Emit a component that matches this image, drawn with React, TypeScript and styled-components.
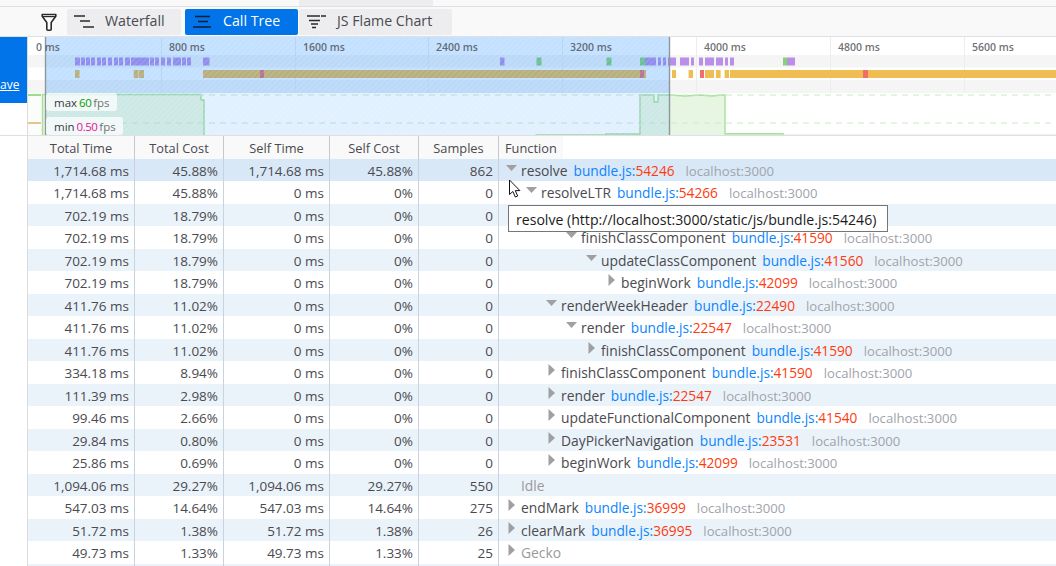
import { createGlobalStyle, styled } from "styled-components";

// == DATA ==
type Row = {
  total: string;
  cost: string;
  self: string;
  selfCost: string;
  samples: string;
  depth: number;
  toggle: "open" | "closed" | "none";
  name?: string;
  line?: string;
  dim?: boolean;
};

const rows: Row[] = [
  { total: "1,714.68 ms", cost: "45.88%", self: "1,714.68 ms", selfCost: "45.88%", samples: "862", depth: 0, toggle: "open", name: "resolve", line: "54246" },
  { total: "1,714.68 ms", cost: "45.88%", self: "0 ms", selfCost: "0%", samples: "0", depth: 1, toggle: "open", name: "resolveLTR", line: "54266" },
  // this row's function sits under the tooltip
  { total: "702.19 ms", cost: "18.79%", self: "0 ms", selfCost: "0%", samples: "0", depth: 2, toggle: "none" },
  { total: "702.19 ms", cost: "18.79%", self: "0 ms", selfCost: "0%", samples: "0", depth: 3, toggle: "open", name: "finishClassComponent", line: "41590" },
  { total: "702.19 ms", cost: "18.79%", self: "0 ms", selfCost: "0%", samples: "0", depth: 4, toggle: "open", name: "updateClassComponent", line: "41560" },
  { total: "702.19 ms", cost: "18.79%", self: "0 ms", selfCost: "0%", samples: "0", depth: 5, toggle: "closed", name: "beginWork", line: "42099" },
  { total: "411.76 ms", cost: "11.02%", self: "0 ms", selfCost: "0%", samples: "0", depth: 2, toggle: "open", name: "renderWeekHeader", line: "22490" },
  { total: "411.76 ms", cost: "11.02%", self: "0 ms", selfCost: "0%", samples: "0", depth: 3, toggle: "open", name: "render", line: "22547" },
  { total: "411.76 ms", cost: "11.02%", self: "0 ms", selfCost: "0%", samples: "0", depth: 4, toggle: "closed", name: "finishClassComponent", line: "41590" },
  { total: "334.18 ms", cost: "8.94%", self: "0 ms", selfCost: "0%", samples: "0", depth: 2, toggle: "closed", name: "finishClassComponent", line: "41590" },
  { total: "111.39 ms", cost: "2.98%", self: "0 ms", selfCost: "0%", samples: "0", depth: 2, toggle: "closed", name: "render", line: "22547" },
  { total: "99.46 ms", cost: "2.66%", self: "0 ms", selfCost: "0%", samples: "0", depth: 2, toggle: "closed", name: "updateFunctionalComponent", line: "41540" },
  { total: "29.84 ms", cost: "0.80%", self: "0 ms", selfCost: "0%", samples: "0", depth: 2, toggle: "closed", name: "DayPickerNavigation", line: "23531" },
  { total: "25.86 ms", cost: "0.69%", self: "0 ms", selfCost: "0%", samples: "0", depth: 2, toggle: "closed", name: "beginWork", line: "42099" },
  { total: "1,094.06 ms", cost: "29.27%", self: "1,094.06 ms", selfCost: "29.27%", samples: "550", depth: 0, toggle: "none", name: "Idle", dim: true },
  { total: "547.03 ms", cost: "14.64%", self: "547.03 ms", selfCost: "14.64%", samples: "275", depth: 0, toggle: "closed", name: "endMark", line: "36999" },
  { total: "51.72 ms", cost: "1.38%", self: "51.72 ms", selfCost: "1.38%", samples: "26", depth: 0, toggle: "closed", name: "clearMark", line: "36995" },
  { total: "49.73 ms", cost: "1.33%", self: "49.73 ms", selfCost: "1.33%", samples: "25", depth: 0, toggle: "closed", name: "Gecko", dim: true },
];

const ticks = [
  { x: 161, label: "800 ms" },
  { x: 295, label: "1600 ms" },
  { x: 428, label: "2400 ms" },
  { x: 562, label: "3200 ms" },
  { x: 696, label: "4000 ms" },
  { x: 830, label: "4800 ms" },
  { x: 964, label: "5600 ms" },
];

// [x, width] in page pixels
const jsBars = [
  [75, 5], [81, 4], [86, 4], [91, 4], [97, 4], [102, 4], [108, 4], [114, 4], [119, 4], [125, 5],
  [131, 18], [150, 4], [155, 4], [161, 4], [167, 4], [173, 8], [182, 4], [187, 4], [203, 6.5],
  [500, 4.5], [645, 11], [658, 3], [663, 3], [668, 8], [680, 9], [691, 3], [699, 4], [705, 9],
  [716, 7], [725, 3], [730, 4], [787, 8],
];
const greenBars = [[536.5, 5], [606.5, 5], [640, 5], [783, 4]];
const orangeBars = [
  [75, 4.5], [133.7, 4.7], [139, 5], [203, 437], [644, 2], [672, 4], [688.6, 4.4], [705, 9],
  [716, 4.6], [724.6, 4.4], [730, 326],
];
const redBars = [[260, 4], [640, 4], [700, 4], [863, 5]];

const fpsPath =
  "M42.5 136 L42.5 94.5 L201 94.5 L201 100 L204 100 L204 136 L536 136 L536 135 L606 135 L606 134 L640 134 L640 95 L654 95 L654 102 L658 102 L658 95 L670 95 L685 96 L700 95 L712 96 L722 95 L725 95 L725 133.7 L783 133.7 L783 135.5 L1056 135.5";

// == STYLES ==
const GlobalStyle = createGlobalStyle`
  html, body {
    margin: 0;
    padding: 0;
    height: 566px;
    overflow: hidden;
    background: #fff;
    font-family: "Open Sans", "Liberation Sans", sans-serif;
    color: #4a4a4f;
  }
`;

const Page = styled.div`
  position: relative;
  width: 1056px;
  height: 566px;
  overflow: hidden;
`;

const TopStrip = styled.div`
  height: 6px;
  padding-left: 299px;
  background: #f9f9fa;
  border-bottom: 1px solid #e0e0e2;
`;

const TopTab = styled.div`
  width: 134px;
  height: 6px;
  background: #ededf0;
`;

const Toolbar = styled.div`
  display: flex;
  align-items: center;
  height: 29px;
  padding-left: 41px;
  background: #f9f9fa;
  border-bottom: 1px solid #e0e0e2;
`;

const FilterIcon = styled.svg`
  width: 16px;
  height: 18px;
  margin-right: 10px;
`;

const TabButton = styled.button<{ $active?: boolean; $width: number; $gap?: number }>`
  display: flex;
  align-items: center;
  gap: 11px;
  width: ${(p) => p.$width}px;
  height: 26px;
  margin-right: ${(p) => p.$gap ?? 0}px;
  padding: 0 0 1.5px 7px;
  border: 0;
  border-radius: 2px;
  background: ${(p) => (p.$active ? "#0074e8" : "#ededf0")};
  color: ${(p) => (p.$active ? "#fff" : "#4a4a4f")};
  font-family: inherit;
  font-size: 14.2px;
`;

const TabIcon = styled.svg`
  width: 20px;
  height: 16px;
  flex: none;
`;

const Timeline = styled.div`
  position: relative;
  height: 98px;
  background: #fff;
`;

const SaveBox = styled.div`
  position: absolute;
  left: 0;
  top: 0;
  width: 27px;
  height: 66px;
  display: flex;
  align-items: flex-end;
  overflow: hidden;
  background: #0074e8;
  color: #fff;
  font-size: 12px;
`;

const SaveLink = styled.a`
  margin-bottom: 10px;
  color: #fff;
  text-decoration: underline;
`;

const TimelineChart = styled.svg`
  position: absolute;
  left: 0;
  top: 0;
  width: 1056px;
  height: 98px;
`;

const TickLabel = styled.span<{ $x: number }>`
  position: absolute;
  top: 3px;
  left: ${(p) => p.$x}px;
  font-size: 10.5px;
  font-weight: 600;
  color: rgba(74, 74, 79, 0.8);
  white-space: nowrap;
`;

const FpsBadge = styled.div<{ $top: number }>`
  position: absolute;
  left: 46px;
  top: ${(p) => p.$top}px;
  height: 18px;
  padding: 0 7px 0 8px;
  display: flex;
  align-items: center;
  gap: 2px;
  border-radius: 3px;
  background: rgba(255, 255, 255, 0.72);
  font-size: 11.5px;
  white-space: nowrap;
  color: #38383d;
`;

const FpsValue = styled.span<{ $color: string }>`
  color: ${(p) => p.$color};
  letter-spacing: -0.5px;
`;

const FpsUnit = styled.span`
  color: #737373;
`;

const Table = styled.div`
  border-top: 1px solid #e0e0e2;
`;

const HeaderRow = styled.div`
  display: flex;
  height: 22.5px;
  font-size: 12.8px;
  line-height: 24.5px;
`;

const Gutter = styled.div`
  flex: none;
  width: 27px;
  border-right: 1px solid #dcdcde;
  background: #fff;
`;

const HeaderCell = styled.div<{ $width: number }>`
  flex: none;
  box-sizing: border-box;
  width: ${(p) => p.$width}px;
  text-align: center;
  background: #f9f9fa;
  border-right: 1px solid #c8c8cc;
`;

const HeaderFunction = styled.div`
  flex: none;
  width: 64px;
  padding-left: 6px;
  box-sizing: border-box;
  background: #f9f9fa;
`;

const DataRow = styled.div<{ $bg: string }>`
  display: flex;
  height: 22.5px;
  font-size: 13.5px;
  line-height: 24.5px;
  white-space: nowrap;

  & > *:not(:first-child) {
    background: ${(p) => p.$bg};
  }
`;

const NumberCell = styled.div<{ $width: number }>`
  flex: none;
  box-sizing: border-box;
  width: ${(p) => p.$width}px;
  padding-right: 5px;
  text-align: right;
  border-right: 1px solid #c8d3dd;
`;

const FunctionCell = styled.div<{ $depth: number }>`
  flex: 1;
  box-sizing: border-box;
  height: 22.5px;
  display: flex;
  align-items: center;
  padding: 2px 0 0 ${(p) => 7 + p.$depth * 20}px;
  font-size: 13.85px;
  line-height: 20.5px;
`;

const Toggle = styled.svg`
  flex: none;
  width: 11px;
  height: 12px;
  margin: -6px 4px 0 0;
`;

const Name = styled.span<{ $dim?: boolean }>`
  margin-right: 6px;
  color: ${(p) => (p.$dim ? "#9a9a9a" : "#4a4a4f")};
`;

const Source = styled.span`
  font-size: 13.7px;
  color: #0a84ff;
`;

const LineNo = styled.span`
  font-size: 13.7px;
  color: #ff3a0f;
`;

const Host = styled.span`
  margin-left: 11px;
  font-size: 13.15px;
  color: #a0a4ab;
`;

const Tooltip = styled.div`
  position: absolute;
  left: 508px;
  top: 205px;
  box-sizing: border-box;
  width: 380px;
  height: 27px;
  padding: 1px 0 0 7px;
  display: flex;
  align-items: center;
  background: #fff;
  border: 1px solid #767676;
  font-size: 14.1px;
  color: #1b1b1b;
  white-space: nowrap;
`;

const Cursor = styled.svg`
  position: absolute;
  left: 508px;
  top: 179px;
  width: 14px;
  height: 20px;
`;

// == COMPONENTS ==
const Arrow = ({ open }: { open: boolean }) => (
  <Toggle viewBox="0 0 11 12">
    {open ? <path d="M0 3h11L5.5 9z" fill="#a0a0a3" /> : <path d="M2.5 0v12L9 6z" fill="#a0a0a3" />}
  </Toggle>
);

const rowBg = (i: number) => (i === 0 ? "#d9e8f6" : i % 2 === 0 ? "#ebf3fa" : "#fff");

export default function App() {
  return (
    <Page>
      <GlobalStyle />
      <TopStrip>
        <TopTab />
      </TopStrip>
      <Toolbar>
        <FilterIcon viewBox="0 0 16 18">
          <path d="M1.2 1.5h13.6v1.8L10.2 9.5v6.7a1 1 0 0 1-1 1H6.8a1 1 0 0 1-1-1V9.5L1.2 3.3z" fill="#fff" stroke="#2a2a2e" strokeWidth="1.6" strokeLinejoin="round" />
          <path d="M1.5 3.6h13" stroke="#2a2a2e" strokeWidth="1.2" />
        </FilterIcon>
        <TabButton $width={114} $gap={4}>
          <TabIcon viewBox="0 0 20 16" stroke="#2a2a2e" strokeWidth="1.4">
            <path d="M0 3h11M6 8h10M9 14h11" />
          </TabIcon>
          Waterfall
        </TabButton>
        <TabButton $active $width={113} $gap={1}>
          <TabIcon viewBox="0 0 20 16" stroke="#0c1c33" strokeWidth="1.4">
            <path d="M3 3.5h15M6 8.5h10M1 14h18" />
          </TabIcon>
          Call Tree
        </TabButton>
        <TabButton $width={153}>
          <TabIcon viewBox="0 0 20 16" stroke="#2a2a2e" strokeWidth="1.3">
            <path d="M1 3h13M15 3h6M3 7.5h11M5 11h7M6 14.5h4" />
          </TabIcon>
          JS Flame Chart
        </TabButton>
      </Toolbar>
      <Timeline>
        <TimelineChart viewBox="0 37 1056 98">
          <defs>
            <pattern id="hatch" width="4" height="4" patternUnits="userSpaceOnUse" patternTransform="rotate(45)">
              <rect width="2" height="4" fill="rgba(255,255,255,0.1)" />
            </pattern>
          </defs>
          <rect x="27" y="55" width="1029" height="12.5" fill="#f5f5f5" />
          <rect x="27" y="80" width="1029" height="13" fill="#f5f5f5" />
          {ticks.map((t) => (
            <path key={t.x} d={`M${t.x + 0.5} 37V93`} stroke="#ededed" />
          ))}
          {jsBars.map(([x, w]) => (
            <rect key={x} x={x} y="57.5" width={w} height="8" fill="#b98fe9" />
          ))}
          {greenBars.map(([x, w]) => (
            <rect key={x} x={x} y="57.5" width={w} height="8" fill="#85d470" />
          ))}
          {orangeBars.map(([x, w]) => (
            <rect key={x} x={x} y="70" width={w} height="8" fill="#efbd52" />
          ))}
          {redBars.map(([x, w]) => (
            <rect key={x} x={x} y="70" width={w} height="8" fill="#ee6d6d" />
          ))}
          <rect x="27" y="93" width="16" height="42" fill="#fafdf9" />
          <path d="M28 95h13" stroke="#3bbf1e" />
          <path d="M28 123h13" stroke="#d98a1e" />
          <path d={fpsPath + " L1056 136 L42.5 136 Z"} fill="rgba(133,212,112,0.2)" stroke="none" />
          <path d={fpsPath} fill="none" stroke="#a6e09a" strokeWidth="1.4" />
          <path d="M44 95H1056M44 123H1056" stroke="#c8ebc4" strokeDasharray="6 5" />
          <rect x="46" y="37" width="623" height="56" fill="rgba(10,132,255,0.25)" />
          <rect x="46" y="93" width="623" height="42" fill="rgba(10,132,255,0.12)" />
          <rect x="46" y="37" width="623" height="98" fill="url(#hatch)" />
          <path d="M45.5 37V135M669.5 37V135" stroke="#8f969c" strokeWidth="1.4" />
          <path d="M27.5 37V135" stroke="#dcdcde" />
        </TimelineChart>
        <TickLabel $x={36}>0 ms</TickLabel>
        {ticks.map((t) => (
          <TickLabel key={t.x} $x={t.x + 8}>
            {t.label}
          </TickLabel>
        ))}
        <SaveBox>
          <SaveLink>ave</SaveLink>
        </SaveBox>
        <FpsBadge $top={56}>
          max <FpsValue $color="#0a9c00">60</FpsValue> <FpsUnit>fps</FpsUnit>
        </FpsBadge>
        <FpsBadge $top={80}>
          min <FpsValue $color="#e6109a">0.50</FpsValue> <FpsUnit>fps</FpsUnit>
        </FpsBadge>
      </Timeline>
      <Table>
        <HeaderRow>
          <Gutter />
          <HeaderCell $width={107}>Total Time</HeaderCell>
          <HeaderCell $width={89}>Total Cost</HeaderCell>
          <HeaderCell $width={106}>Self Time</HeaderCell>
          <HeaderCell $width={89}>Self Cost</HeaderCell>
          <HeaderCell $width={80}>Samples</HeaderCell>
          <HeaderFunction>Function</HeaderFunction>
        </HeaderRow>
        {rows.map((r, i) => (
          <DataRow key={i} $bg={rowBg(i)}>
            <Gutter />
            <NumberCell $width={107}>{r.total}</NumberCell>
            <NumberCell $width={89}>{r.cost}</NumberCell>
            <NumberCell $width={106}>{r.self}</NumberCell>
            <NumberCell $width={89}>{r.selfCost}</NumberCell>
            <NumberCell $width={80}>{r.samples}</NumberCell>
            <FunctionCell $depth={r.depth}>
              {r.toggle === "none" ? <Toggle viewBox="0 0 11 12" /> : <Arrow open={r.toggle === "open"} />}
              {r.name && <Name $dim={r.dim}>{r.name}</Name>}
              {r.line && (
                <>
                  <Source>bundle.js:</Source>
                  <LineNo>{r.line}</LineNo>
                  <Host>localhost:3000</Host>
                </>
              )}
            </FunctionCell>
          </DataRow>
        ))}
        <DataRow $bg="#ebf3fa">
          <Gutter />
          <NumberCell $width={107} />
          <NumberCell $width={89} />
          <NumberCell $width={106} />
          <NumberCell $width={89} />
          <NumberCell $width={80} />
          <FunctionCell $depth={0} />
        </DataRow>
      </Table>
      <Tooltip>resolve (http://localhost:3000/static/js/bundle.js:54246)</Tooltip>
      <Cursor viewBox="0 0 14 20">
        <path d="M1.5 1v14.5l3.4-3 2.4 5.5 2.4-1-2.4-5.4h4.6z" fill="#fff" stroke="#111" strokeWidth="1" strokeLinejoin="round" />
      </Cursor>
    </Page>
  );
}
